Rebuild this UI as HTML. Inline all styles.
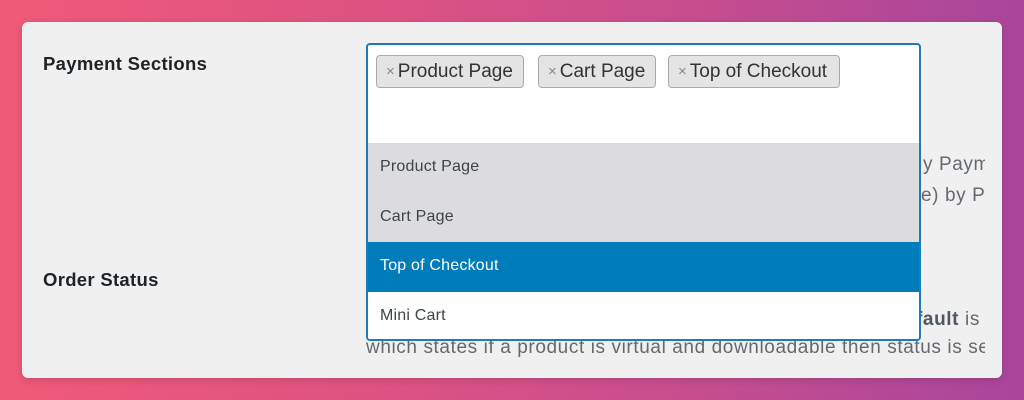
<!DOCTYPE html>
<html><head><style>
*{margin:0;padding:0;box-sizing:border-box}
body{width:1024px;height:400px;overflow:hidden;background:linear-gradient(90deg,#ef5a78 0%,#dc5283 40%,#c04c92 75%,#a9459b 100%);font-family:"Liberation Sans",sans-serif;position:relative}
.card{position:absolute;left:22px;top:22px;width:980px;height:356px;background:#f0f0f1;border-radius:6px;box-shadow:0 2px 8px rgba(0,0,0,.15);overflow:hidden}
.lbl{position:absolute;left:21px;font-weight:bold;font-size:18.5px;color:#1d2327;letter-spacing:.3px}
.clip{position:absolute;left:344px;top:0;width:619px;height:356px;overflow:hidden}
.desc{position:absolute;white-space:nowrap;font-size:19px;color:#646970;letter-spacing:.6px}
.sel{position:absolute;left:344px;top:21px;width:555px;height:298px;background:#fff;border:2px solid #1e7bb8;border-radius:4px;overflow:hidden}
.tag{position:absolute;top:10px;height:33px;background:#e4e4e4;border:1px solid #aaa;border-radius:4px;font-size:19px;color:#333;line-height:31px;padding:0 10px 0 9px}
.tag b{font-weight:normal;color:#888;font-size:15px;margin-right:3px;position:relative;top:-1px}
.opt{position:absolute;left:0;width:551px;height:50px;font-size:16px;color:#3c434a;line-height:48px;padding-left:12px;letter-spacing:.2px}
</style></head><body>
<div class="card">
 <div class="lbl" style="top:31px">Payment Sections</div>
 <div class="lbl" style="top:247px">Order Status</div>
 <div class="clip">
  <div class="desc" style="left:557px;top:132px">y Payment</div>
  <div class="desc" style="left:555px;top:163px">e) by Pay</div>
  <div class="desc" style="left:550px;top:287px;font-weight:bold;color:#50575e">fault <span style="font-weight:normal;color:#646970">is</span></div>
  <div class="desc" style="left:0;top:315px">which states if a product is virtual and downloadable then status is set</div>
 </div>
 <div class="sel">
  <div class="tag" style="left:8px"><b>×</b>Product Page</div>
  <div class="tag" style="left:170px"><b>×</b>Cart Page</div>
  <div class="tag" style="left:300px;padding-right:12px"><b>×</b>Top of Checkout</div>
  <div class="opt" style="top:98px;background:#dcdcde">Product Page</div>
  <div class="opt" style="top:148px;background:#dcdcde">Cart Page</div>
  <div class="opt" style="top:197px;background:#007cba;color:#fff">Top of Checkout</div>
  <div class="opt" style="top:247px;background:#fff">Mini Cart</div>
 </div>
</div>
</body></html>
